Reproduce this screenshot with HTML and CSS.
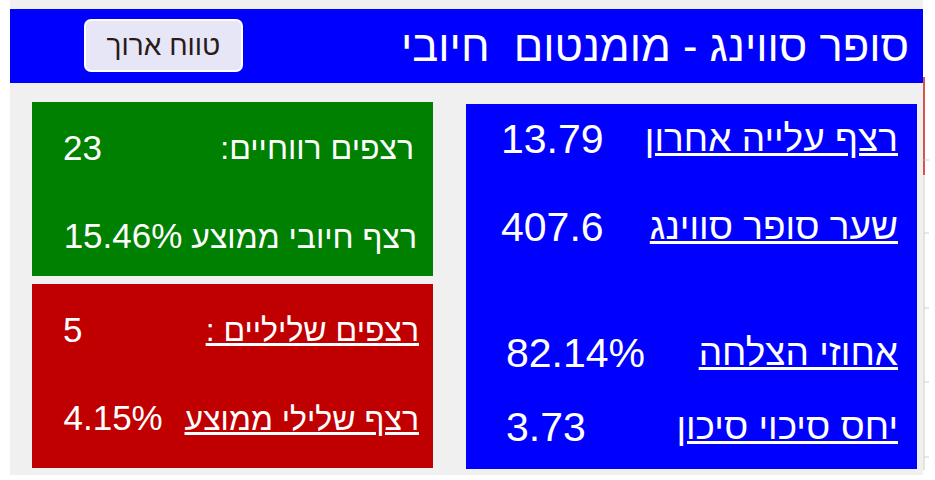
FILE: index.html
```html
<!DOCTYPE html>
<html lang="he" dir="rtl">
<head>
    <meta charset="UTF-8">
    <meta name="viewport" content="width=device-width, initial-scale=1.0">
    <title>סופר סווינג</title>
    <link rel="stylesheet" href="styles.css">
</head>
<body>
<div class="frame">
    <div class="ruler">
        <svg width="12" height="480" viewBox="0 0 12 480">
            <line x1="1" y1="84" x2="1" y2="470" stroke="#c8c8c8" stroke-width="1"/>
            <line x1="1" y1="77" x2="1" y2="175" stroke="#d9534f" stroke-width="2"/>
            <line x1="1" y1="160" x2="6" y2="160" stroke="#d0d0d0"/>
            <line x1="1" y1="233" x2="6" y2="233" stroke="#d0d0d0"/>
            <line x1="1" y1="308" x2="6" y2="308" stroke="#d0d0d0"/>
            <line x1="1" y1="382" x2="6" y2="382" stroke="#d0d0d0"/>
            <line x1="1" y1="457" x2="6" y2="457" stroke="#d0d0d0"/>
        </svg>
    </div>
    <div class="sheet">
        <div class="header">
            <h1 class="title">סופר סווינג - מומנטום&nbsp; חיובי</h1>
            <button class="range-btn">טווח ארוך</button>
        </div>

        <div class="content">
            <!-- swing stats -->
            <div class="box box-blue">
                <div class="row row-1">
                    <a class="label">רצף עלייה אחרון</a>
                    <span class="value">13.79</span>
                </div>
                <div class="row row-2">
                    <a class="label">שער סופר סווינג</a>
                    <span class="value">407.6</span>
                </div>
                <div class="row row-3">
                    <a class="label">אחוזי הצלחה</a>
                    <span class="value value-shift">82.14%</span>
                </div>
                <div class="row row-4">
                    <a class="label">יחס סיכוי סיכון</a>
                    <span class="value value-shift">3.73</span>
                </div>
            </div>

            <div class="side">
                <div class="box box-green">
                    <div class="line">
                        <span>רצפים רווחיים:</span>
                        <span class="num">23</span>
                    </div>
                    <div class="line">
                        <span>רצף חיובי ממוצע <span class="num">15.46%</span></span>
                    </div>
                </div>
                <div class="box box-red">
                    <div class="line">
                        <a class="label">רצפים שליליים :</a>
                        <span class="num">5</span>
                    </div>
                    <div class="line">
                        <span><a class="label">רצף שלילי ממוצע</a>&nbsp; <span class="num pct">4.15%</span></span>
                    </div>
                </div>
            </div>
        </div>
    </div>
</div>
</body>
</html>
```

FILE: styles.css
```css
body {
    margin: 0;
    background-color: #ffffff;
    font-family: "Liberation Sans", Arial, sans-serif;
    color: #ffffff;
}

.frame {
    display: flex;
    direction: rtl;
    height: 480px;
}

.ruler {
    width: 12px;
    flex-shrink: 0;
    direction: ltr;
}

.ruler svg {
    display: block;
}

.sheet {
    width: 913px;
    height: 475px;
    background-color: #f0f0f0;
    padding-top: 9px;
    box-sizing: border-box;
}

.header {
    height: 74px;
    background-color: #0000ff;
    display: flex;
    align-items: center;
    justify-content: space-between;
    padding: 0 14px 0 74px;
}

.title {
    margin: 0;
    font-size: 43.5px;
    font-weight: normal;
    color: #ffffff;
}

.range-btn {
    width: 159px;
    height: 53px;
    margin-top: -1px;
    background-color: #e6e6f7;
    border: 2px solid #ffffff;
    border-radius: 7px;
    color: #2a1a1a;
    font-family: "Liberation Sans", Arial, sans-serif;
    font-size: 28px;
    padding: 0;
}

.content {
    display: flex;
    gap: 33px;
    padding: 19px 6px 0 21px;
}

.box {
    box-sizing: border-box;
}

.box a.label {
    color: #ffffff;
    text-decoration: underline;
}

.box-blue {
    width: 451px;
    height: 365px;
    margin-top: 2px;
    background-color: #0000ff;
    padding: 12px 19px 0 35px;
    font-size: 37px;
}

.row {
    display: flex;
    align-items: center;
}

.row .label {
    flex: 1;
}

.row .value {
    font-size: 41px;
    text-align: left;
    direction: ltr;
}

.row .value-shift {
    padding-left: 5px;
}

.row-1 { height: 46px; }
.row-2 { height: 46px; margin-top: 42px; }
.row-3 { height: 46px; margin-top: 80px; }
.row-4 { height: 46px; margin-top: 28px; }

.side {
    width: 401px;
    display: flex;
    flex-direction: column;
    gap: 8px;
}

.box-green {
    height: 174px;
    background-color: #008000;
    padding: 26px 16px 0 31px;
    font-size: 32px;
}

.box-red {
    height: 184px;
    background-color: #c00000;
    padding: 26px 14px 0 31px;
    font-size: 32px;
}

.line {
    display: flex;
    justify-content: space-between;
    align-items: center;
    height: 40px;
    white-space: nowrap;
}

.box-green .line:first-child {
    padding-right: 3px;
}

.line + .line {
    margin-top: 48px;
}

.num {
    font-size: 35px;
    direction: ltr;
}

.pct {
    margin-right: 4px;
}
```
